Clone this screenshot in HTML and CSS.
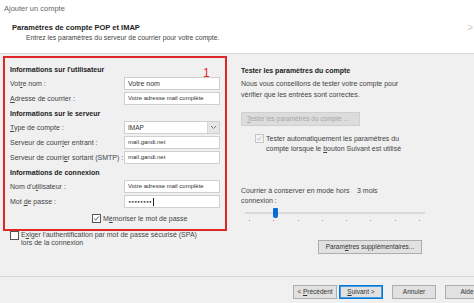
FILE: index.html
```html
<!DOCTYPE html>
<html lang="fr">
<head>
    <title>Ajouter un compte</title>
    <link rel="stylesheet" href="styles.css">
</head>
<body>
<div class="window">
    <div class="head">
        <div class="caption">Ajouter un compte</div>
        <h1>Paramètres de compte POP et IMAP</h1>
        <p>Entrez les paramètres du serveur de courrier pour votre compte.</p>
        <span class="head-arrow">&gt;</span>
    </div>

    <div class="content">
        <div class="left">
            <div class="box">
                <span class="mark">1</span>
                <div class="group-title">Informations sur l'utilisateur</div>
                <div class="row">
                    <label>Vot<u>r</u>e nom :</label>
                    <div class="field">Votre nom</div>
                </div>
                <div class="row">
                    <label><u>A</u>dresse de courrier :</label>
                    <div class="field small">Votre adresse mail complète</div>
                </div>

                <div class="group-title gap">Informations sur le serveur</div>
                <div class="row">
                    <label><u>T</u>ype de compte :</label>
                    <div class="field select">
                        IMAP
                        <span class="drop">
                            <svg width="7" height="5" viewBox="0 0 7 5"><path d="M1 1 L3.5 3.5 L6 1" fill="none" stroke="#777" stroke-width="1"/></svg>
                        </span>
                    </div>
                </div>
                <div class="row">
                    <label>Serveur de courr<u>i</u>er entrant :</label>
                    <div class="field small">mail.gandi.net</div>
                </div>
                <div class="row">
                    <label>Serveur de courri<u>e</u>r sortant (SMTP) :</label>
                    <div class="field small">mail.gandi.net</div>
                </div>

                <div class="group-title gap">Informations de connexion</div>
                <div class="row">
                    <label>Nom d'u<u>t</u>ilisateur :</label>
                    <div class="field small">Votre adresse mail complète</div>
                </div>
                <div class="row">
                    <label>Mot <u>d</u>e passe :</label>
                    <div class="field pass"><span class="dots">••••••••</span><span class="caret"></span></div>
                </div>
                <div class="remember">
                    <span class="check">
                        <svg width="9" height="9" viewBox="0 0 9 9"><path d="M1.5 4.5 L3.5 6.5 L7.5 2" fill="none" stroke="#333" stroke-width="1.1"/></svg>
                    </span>
                    <span>M<u>é</u>moriser le mot de passe</span>
                </div>
            </div>

            <div class="spa">
                <span class="check"></span>
                <span>E<u>x</u>iger l'authentification par mot de passe sécurisé (SPA)<br>lors de la connexion</span>
            </div>
        </div>

        <div class="right">
            <div class="group-title">Tester les paramètres du compte</div>
            <p class="advice">Nous vous conseillons de tester votre compte pour<br>vérifier que les entrées sont correctes.</p>
            <button class="btn disabled"><u>T</u>ester les paramètres du compte ...</button>
            <div class="auto">
                <span class="check dim">
                    <svg width="9" height="9" viewBox="0 0 9 9"><path d="M1.5 4.5 L3.5 6.5 L7.5 2" fill="none" stroke="#b5b5b5" stroke-width="1.1"/></svg>
                </span>
                <span>Tester automatiquement les paramètres du<br>compte lorsque le <u>b</u>outon Suivant est utilisé</span>
            </div>

            <div class="keep">
                <div class="keep-label">Courrier à conserver en mode hors<br>connexion :</div>
                <div class="keep-value">3 mois</div>
            </div>
            <div class="slider">
                <div class="track"></div>
                <div class="thumb"></div>
                <div class="ticks">
                    <i></i><i></i><i></i><i></i><i></i><i></i><i></i><i></i>
                </div>
            </div>

            <div class="more">
                <button class="btn">Param<u>è</u>tres supplémentaires...</button>
            </div>
        </div>
    </div>

    <div class="foot">
        <button class="btn wide">&lt; <u>P</u>récédent</button>
        <button class="btn wide primary"><u>S</u>uivant &gt;</button>
        <button class="btn wide far">Annuler</button>
        <button class="btn wide farther">Aide</button>
    </div>
</div>
</body>
</html>
```

FILE: styles.css
```css
* {
    box-sizing: border-box;
}
body {
    margin: 0;
    font-family: "Liberation Sans", Arial, sans-serif;
    font-size: 7px;
    color: #3a3a3a;
    background-color: #f0f0f0;
    overflow: hidden;
}
u {
    text-decoration: underline;
}
.window {
    width: 474px;
    height: 303px;
    display: flex;
    flex-direction: column;
}
.head {
    position: relative;
    height: 54px;
    background-color: white;
    border-bottom: 1px solid #d6d6d6;
    padding: 4px 0 0 4px;
}
.caption {
    font-size: 7.5px;
    color: #666;
    line-height: 9px;
}
.head h1 {
    margin: 10px 0 0 8px;
    font-size: 7.5px;
    font-weight: bold;
    color: #222;
    line-height: 10px;
}
.head p {
    margin: 0 0 0 22px;
    line-height: 10px;
    color: #444;
    font-size: 6.8px;
}
.head-arrow {
    position: absolute;
    right: 1px;
    top: 22px;
    font-size: 10px;
    color: #c8c8c8;
}
.content {
    flex: 1;
    display: flex;
    padding: 2px 0 0 3px;
    border-bottom: 1px solid #d6d6d6;
}
.left {
    width: 224px;
}
.box {
    position: relative;
    border: 2px solid #e02626;
    padding: 6px 5px 4px 5px;
}
.mark {
    position: absolute;
    left: 198px;
    top: 8px;
    font-size: 12px;
    color: #e02626;
}
.group-title {
    font-weight: bold;
    color: #222;
    height: 12px;
    line-height: 12px;
}
.group-title.gap {
    margin-top: 2px;
}
.row {
    height: 15px;
    display: flex;
    align-items: center;
    justify-content: space-between;
}
.row label {
    color: #444;
}
.field {
    width: 96px;
    height: 13px;
    background-color: white;
    border: 1px solid #cfcfcf;
    padding-left: 3px;
    line-height: 11px;
    color: #333;
}
.field.small {
    font-size: 6px;
}
.field.select {
    position: relative;
    font-size: 6.5px;
}
.drop {
    position: absolute;
    right: 0;
    top: 0;
    width: 12px;
    height: 11px;
    background-color: #e6e6e6;
    border-left: 1px solid #d6d6d6;
    display: flex;
    align-items: center;
    justify-content: center;
}
.field.pass {
    display: flex;
    align-items: center;
}
.dots {
    font-family: "DejaVu Sans", sans-serif;
    font-size: 6px;
    letter-spacing: -0.6px;
    color: #333;
}
.caret {
    width: 1px;
    height: 8px;
    background-color: #222;
    margin-left: 1px;
}
.check {
    width: 9px;
    height: 9px;
    border: 1px solid #555;
    background-color: white;
    display: inline-flex;
    align-items: center;
    justify-content: center;
    flex-shrink: 0;
}
.check svg {
    display: block;
}
.check.dim {
    border-color: #c6c6c6;
    background-color: #f4f4f4;
}
.remember {
    margin-top: 2px;
    height: 14px;
    display: flex;
    align-items: center;
    gap: 2px;
    padding-left: 82px;
    color: #444;
}
.spa {
    display: flex;
    gap: 2px;
    margin: 0 0 0 7px;
    line-height: 8px;
    color: #444;
}
.right {
    width: 200px;
    margin-left: 14px;
    padding-top: 9px;
}
.advice {
    margin: 1px 0 0 0;
    line-height: 11px;
    color: #444;
}
.btn {
    font-family: "Liberation Sans", Arial, sans-serif;
    font-size: 6.5px;
    color: #333;
    background-color: #e1e1e1;
    border: 1px solid #adadad;
    height: 14px;
    padding: 0 5px;
    line-height: 12px;
}
.btn.disabled {
    margin-top: 12px;
    width: 119px;
    text-align: left;
    color: #a6a6a6;
    background-color: #dcdcdc;
    border-color: #cfcfcf;
}
.auto {
    display: flex;
    gap: 2px;
    margin: 8px 0 0 14px;
    line-height: 10px;
    color: #444;
}
.keep {
    display: flex;
    margin-top: 32px;
    line-height: 10px;
    color: #444;
}
.keep-label {
    width: 116px;
}
.slider {
    position: relative;
    height: 16px;
    width: 180px;
    margin-left: 4px;
}
.track {
    position: absolute;
    left: 0;
    right: 0;
    top: 6px;
    height: 2px;
    background-color: #dadada;
}
.thumb {
    position: absolute;
    left: 28px;
    top: 2px;
    width: 5px;
    height: 10px;
    background-color: #0a6cd6;
    border-radius: 1px 1px 2px 2px;
}
.ticks {
    position: absolute;
    left: 4px;
    right: 5px;
    top: 14px;
    display: flex;
    justify-content: space-between;
}
.ticks i {
    width: 1px;
    height: 1px;
    background-color: #999;
}
.more {
    display: flex;
    justify-content: flex-end;
    margin-top: 18px;
    padding-right: 19px;
}
.more .btn {
    width: 104px;
}
.foot {
    height: 26px;
    display: flex;
    align-items: flex-start;
    padding: 8px 0 0 293px;
    overflow: hidden;
}
.btn.wide {
    width: 44px;
    flex-shrink: 0;
    padding: 0;
}
.btn.primary {
    margin-left: 2px;
    border: 1px solid #0078d7;
    box-shadow: inset 0 0 0 1px #4a9be0;
}
.btn.far {
    margin-left: 9px;
}
.btn.farther {
    margin-left: 9px;
}
```
